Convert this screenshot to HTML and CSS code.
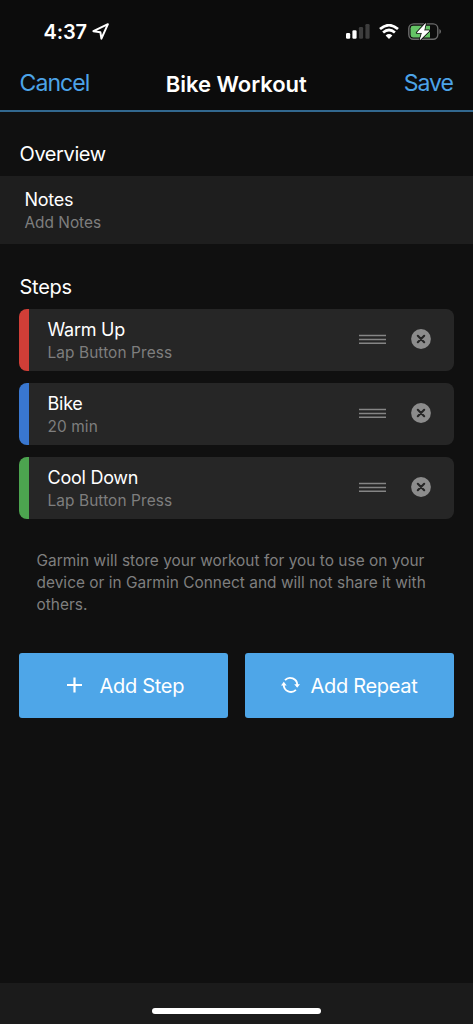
FILE: index.html
```html
<!DOCTYPE html>
<html lang="en">
<head>
<meta charset="utf-8">
<title>Bike Workout</title>
<link rel="stylesheet" href="styles.css">
</head>
<body>
<div class="screen">
  <header class="header">
    <div class="status">
      <span class="time">4:37</span>
      <svg class="location" width="18" height="18" viewBox="0 0 18 18"><path d="M1.4 8.2 15.9 1.2 9.4 15.7 8.4 9.3Z" fill="none" stroke="#fff" stroke-width="2" stroke-linejoin="round"/></svg>
      <div class="indicators">
        <svg width="24" height="16" viewBox="0 0 24 16"><rect x="0" y="9" width="4.2" height="5.8" rx="1.2" fill="#fff"/><rect x="6.4" y="6.2" width="4.2" height="8.6" rx="1.2" fill="#fff"/><rect x="12.9" y="3" width="4.2" height="11.8" rx="1.2" fill="#3d3d3d"/><rect x="19.4" y="0" width="4.2" height="14.8" rx="1.2" fill="#3d3d3d"/></svg>
        <svg width="20" height="16" viewBox="0 0 20 16"><g fill="none" stroke="#fff" stroke-width="2.7"><path d="M1 5.1Q10-2.7 19 5.1"/><path d="M4.1 8.6Q10 3.4 15.9 8.6"/></g><path d="M6.6 11.4Q10 8.6 13.4 11.4L10 14.9Z" fill="#fff"/></svg>
        <svg width="34" height="18" viewBox="0 0 34 18"><rect x=".8" y=".9" width="29" height="15.4" rx="4.7" fill="none" stroke="#6b6b6b" stroke-width="1.4"/><path d="M31.4 6.1Q33 6.8 33 8.6T31.4 11.1Z" fill="#6b6b6b"/><path d="M5 2.8H22V14.4H5Q2.6 14.4 2.6 12V5.2Q2.6 2.8 5 2.8Z" fill="#65c466"/><path d="M17.6.4 9 9.7H14.2L12 16.8 21.2 7.7H15.9Z" fill="#fff" stroke="#0c0c0c" stroke-width="2.2" paint-order="stroke" stroke-linejoin="round"/><path d="M17.6.4 9 9.7H14.2L12 16.8 21.2 7.7H15.9Z" fill="#fff" stroke="#fff" stroke-width=".4"/></svg>
      </div>
    </div>
    <nav class="nav">
      <span class="action cancel">Cancel</span>
      <h1 class="title">Bike Workout</h1>
      <span class="action save">Save</span>
    </nav>
  </header>
  <main class="content">
    <h2 class="heading">Overview</h2>
    <section class="notes">
      <div class="label">Notes</div>
      <div class="detail add-notes">Add Notes</div>
    </section>
    <h2 class="heading steps-heading">Steps</h2>
    <section class="steps">
      <article class="step red">
        <div class="step-text"><div class="label">Warm Up</div><div class="detail">Lap Button Press</div></div>
        <svg class="grip" width="27" height="10" viewBox="0 0 27 10"><path d="M0 1.5H27M0 5.5H27M0 9.2H27" stroke="#858585" stroke-width="1.4"/></svg>
        <svg class="remove" width="20" height="20" viewBox="0 0 20 20"><circle cx="10" cy="10" r="9.9" fill="#8c8c8c"/><path d="M6.8 6.8 13.2 13.2M13.2 6.8 6.8 13.2" stroke="#252525" stroke-width="2.1" stroke-linecap="round"/></svg>
      </article>
      <article class="step blue">
        <div class="step-text"><div class="label">Bike</div><div class="detail">20 min</div></div>
        <svg class="grip" width="27" height="10" viewBox="0 0 27 10"><path d="M0 1.5H27M0 5.5H27M0 9.2H27" stroke="#858585" stroke-width="1.4"/></svg>
        <svg class="remove" width="20" height="20" viewBox="0 0 20 20"><circle cx="10" cy="10" r="9.9" fill="#8c8c8c"/><path d="M6.8 6.8 13.2 13.2M13.2 6.8 6.8 13.2" stroke="#252525" stroke-width="2.1" stroke-linecap="round"/></svg>
      </article>
      <article class="step green">
        <div class="step-text"><div class="label">Cool Down</div><div class="detail">Lap Button Press</div></div>
        <svg class="grip" width="27" height="10" viewBox="0 0 27 10"><path d="M0 1.5H27M0 5.5H27M0 9.2H27" stroke="#858585" stroke-width="1.4"/></svg>
        <svg class="remove" width="20" height="20" viewBox="0 0 20 20"><circle cx="10" cy="10" r="9.9" fill="#8c8c8c"/><path d="M6.8 6.8 13.2 13.2M13.2 6.8 6.8 13.2" stroke="#252525" stroke-width="2.1" stroke-linecap="round"/></svg>
      </article>
    </section>
    <p class="notice">Garmin will store your workout for you to use on your<br>device or in Garmin Connect and will not share it with<br>others.</p>
    <div class="buttons">
      <div class="button add-step">
        <svg class="plus" width="15" height="16" viewBox="0 0 15 16"><path d="M0 8H15M7.5.5V15.5" stroke="#fff" stroke-width="2.2"/></svg>
        <span>Add Step</span>
      </div>
      <div class="button add-repeat">
        <svg class="repeat" width="20" height="18" viewBox="0 0 20 18"><g fill="none" stroke="#fff" stroke-width="1.9"><path d="M4 4.1A7.2 7.2 0 0 1 16.3 9"/><path d="M14.9 13.9A7.2 7.2 0 0 1 2.7 9"/></g><path d="M0 9.4 2.8 5.8 5.7 9.4ZM13.2 8.2H19L16.2 11.8Z" fill="#fff"/></svg>
        <span>Add Repeat</span>
      </div>
    </div>
  </main>
  <footer class="footer"><div class="home"></div></footer>
</div>
</body>
</html>
```
FILE: styles.css
```css
* { box-sizing: border-box; }
body { margin: 0; background: #101010; }
svg { display: block; flex: none; }
.screen {
  display: flex;
  flex-direction: column;
  width: 473px;
  height: 1024px;
  overflow: hidden;
  color: #fff;
  background: #101010;
  font-family: Inter, "Liberation Sans", sans-serif;
  white-space: nowrap;
}
.header { height: 112px; background: #0c0c0c; border-bottom: 2px solid #32688f; }
.status { display: flex; height: 56px; padding: 7px 31px 0 43.5px; align-items: center; }
.time { width: 48.5px; font-size: 20px; font-weight: 600; letter-spacing: -.1px; }
.indicators { display: flex; align-items: center; gap: 9px; margin-left: auto; }
.nav { display: grid; grid-template-columns: 1fr auto 1fr; height: 54px; padding: 0 20px 0 19.5px; align-items: center; }
.action { color: #4ca4e8; font-size: 23px; letter-spacing: -.9px; }
.save { text-align: right; letter-spacing: -1px; }
.title { margin: 0; padding-top: 1px; font-size: 22px; font-weight: 600; letter-spacing: -.03px; }
.content { flex: 1; }
.heading { height: 64px; margin: 0; padding: 28px 19.5px 0; font-size: 20px; line-height: 28px; font-weight: 400; letter-spacing: -.4px; }
.notes { height: 68px; padding: 12px 24.5px; background: #1e1e1e; }
.label { font-size: 18px; line-height: 24px; letter-spacing: -.25px; }
.detail { color: #7e7e7e; font-size: 15.4px; line-height: 21px; letter-spacing: .1px; }
.add-notes { letter-spacing: 0; }
.steps-heading { height: 65px; letter-spacing: -.25px; padding-top: 29px; }
.steps { display: grid; gap: 12px; padding: 0 19px; }
.step { display: flex; align-items: center; height: 62px; padding-right: 23px; border-radius: 8px; }
.step-text { flex: 1; padding-left: 28.5px; }
.grip { margin: 0 25px 2px 0; }
.remove { margin-bottom: 2px; }
.red { background: linear-gradient(90deg, #d03e37 10px, #262626 10px); }
.blue { background: linear-gradient(90deg, #3977d0 10px, #262626 10px); }
.green { background: linear-gradient(90deg, #4ca44f 10px, #262626 10px); }
.notice { margin: 31px 0 36.5px; padding-left: 36.5px; color: #7f7f7f; font-size: 15.4px; line-height: 22px; letter-spacing: .04px; }
.buttons { display: grid; grid-template-columns: 1fr 1fr; gap: 17px; padding: 0 19px; }
.button { display: flex; align-items: center; height: 65.5px; padding-top: 1px; border-radius: 3px; background: #4ea6e8; font-size: 20px; letter-spacing: -.3px; }
.add-step { padding-left: 48px; gap: 17.5px; }
.add-repeat { padding-left: 35.5px; gap: 10px; }
.plus, .repeat { margin-bottom: 2px; }
.footer { display: flex; justify-content: center; height: 41px; padding-top: 25px; background: #1b1b1b; }
.home { width: 169px; height: 6px; border-radius: 3px; background: #fff; }
```
